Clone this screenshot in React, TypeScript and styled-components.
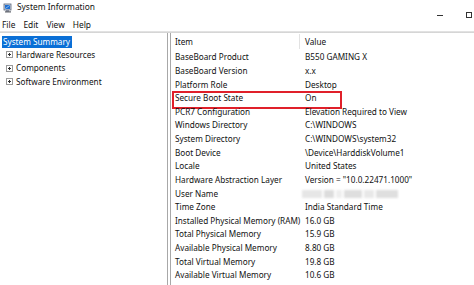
import React from "react";
import styled, { createGlobalStyle, css } from "styled-components";

const GlobalStyle = createGlobalStyle`
  html, body { margin: 0; padding: 0; background: #ffffff; }
  body { font-family: "Noto Sans", "Open Sans", sans-serif; color: #111; }
  * { box-sizing: border-box; }
`;

const Window = styled.div`
  width: 474px;
  height: 285px;
  overflow: hidden;
  display: flex;
  flex-direction: column;
  background: #ffffff;
  font-size: 8.2px;
`;

const TitleBar = styled.div`
  height: 17px;
  display: flex;
  align-items: flex-start;
  padding: 1px 0 0 3px;
`;

const TitleText = styled.span`
  margin-left: 4px;
  line-height: 12px;
  font-size: 8.4px;
  color: #111;
`;

const Controls = styled.div`
  margin-left: auto;
  display: flex;
  align-items: center;
  gap: 23px;
  height: 10px;
  margin-top: 9px;
  margin-right: 2px;
`;

const MinGlyph = styled.div`
  width: 6px;
  height: 1px;
  background: #333;
`;

const MaxGlyph = styled.div`
  width: 6px;
  height: 6px;
  border: 1px solid #333;
`;

const MenuBar = styled.div`
  height: 14px;
  display: flex;
  align-items: center;
  gap: 8px;
  padding: 1px 0 0 2px;
`;

const MenuItem = styled.span`
  line-height: 12px;
  font-size: 8.4px;
`;

const Divider = styled.div`
  height: 2px;
  background: linear-gradient(#e8e8e8, #cfcfcf);
`;

const Body = styled.div`
  flex: 1;
  display: flex;
  min-height: 0;
`;

const LeftPane = styled.div`
  width: 168px;
  border-right: 1px solid #a8a8a8;
  padding: 2px 0 0 2px;
  display: flex;
  flex-direction: column;
`;

const TreeRow = styled.div<{ $indent?: boolean }>`
  height: 13.3px;
  display: flex;
  align-items: center;
  padding-left: ${(p) => (p.$indent ? "4px" : "0")};
`;

const TreeLabel = styled.span<{ $selected?: boolean }>`
  line-height: 12px;
  padding: 0 2px 0 1px;
  ${(p) =>
    p.$selected &&
    css`
      background: #0a6fd6;
      color: #ffffff;
    `}
`;

const Expander = styled.svg`
  width: 7px;
  height: 7px;
  margin-right: 2px;
  flex: none;
`;

const RightPane = styled.div`
  flex: 1;
  margin-left: 2px;
  border-left: 1px solid #a8a8a8;
  display: flex;
  flex-direction: column;
`;

const ListGrid = styled.div`
  display: grid;
  grid-template-columns: 129px 1fr;
`;

const HeaderRow = styled(ListGrid)`
  height: 17.5px;
  align-items: stretch;
  padding: 1px 0 2px;
`;

const HeaderCell = styled.div<{ $sep?: boolean }>`
  display: flex;
  align-items: center;
  padding-left: ${(p) => (p.$sep ? "4px" : "5px")};
  border-right: ${(p) => (p.$sep ? "1px solid #e2e2e2" : "none")};
`;

const Row = styled(ListGrid)<{ $marked?: boolean }>`
  height: 13.625px;
  align-items: center;
  position: relative;
  ${(p) =>
    p.$marked &&
    css`
      &::after {
        content: "";
        position: absolute;
        left: 1px;
        top: 0;
        width: 166px;
        height: 14px;
        border: 2px solid #e0202a;
      }
    `}
`;

const Cell = styled.div<{ $value?: boolean }>`
  white-space: nowrap;
  line-height: 12px;
  padding-left: ${(p) => (p.$value ? "5px" : "4px")};
`;

const Blur = styled.span`
  display: inline-flex;
  gap: 2px;
  vertical-align: middle;
  margin-left: -3px;
`;

const BlurBlock = styled.span<{ $w: number; $shade: string }>`
  display: inline-block;
  height: 8px;
  width: ${(p) => p.$w}px;
  background: ${(p) => p.$shade};
  filter: blur(1px);
`;

const AppIcon = () => (
  <svg width="10" height="10" viewBox="0 0 10 10" style={{ marginTop: 2, flex: "none" }}>
    <rect x="1" y="1" width="7" height="6" fill="#cfd8e4" stroke="#5a6478" strokeWidth="0.8" />
    <rect x="2" y="2" width="5" height="4" fill="#1f6fd0" />
    <path d="M2.2 5.6 L6.8 2.4" stroke="#9cc6f5" strokeWidth="0.8" />
    <rect x="3" y="7.4" width="3" height="1" fill="#5a6478" />
    <rect x="2" y="8.4" width="6" height="1" fill="#3a3f4a" />
  </svg>
);

const Plus = () => (
  <Expander viewBox="0 0 7 7">
    <rect x="0.5" y="0.5" width="6" height="6" fill="#fff" stroke="#9a9a9a" strokeWidth="1" />
    <path d="M2 3.5 H5 M3.5 2 V5" stroke="#333" strokeWidth="1" />
  </Expander>
);

const rows: [string, string][] = [
  ["BaseBoard Product", "B550 GAMING X"],
  ["BaseBoard Version", "x.x"],
  ["Platform Role", "Desktop"],
  ["Secure Boot State", "On"],
  ["PCR7 Configuration", "Elevation Required to View"],
  ["Windows Directory", "C:\\WINDOWS"],
  ["System Directory", "C:\\WINDOWS\\system32"],
  ["Boot Device", "\\Device\\HarddiskVolume1"],
  ["Locale", "United States"],
  ["Hardware Abstraction Layer", 'Version = "10.0.22471.1000"'],
  ["User Name", "__blur__"],
  ["Time Zone", "India Standard Time"],
  ["Installed Physical Memory (RAM)", "16.0 GB"],
  ["Total Physical Memory", "15.9 GB"],
  ["Available Physical Memory", "8.80 GB"],
  ["Total Virtual Memory", "19.8 GB"],
  ["Available Virtual Memory", "10.6 GB"],
];

const blurBlocks: [number, string][] = [
  [20, "#e6e6e6"],
  [10, "#dcdcdc"],
  [6, "#eeeeee"],
  [18, "#dedede"],
  [10, "#e8e8e8"],
  [22, "#dfdfdf"],
];

export default function App() {
  return (
    <>
      <GlobalStyle />
      <Window>
        <TitleBar>
          <AppIcon />
          <TitleText>System Information</TitleText>
          <Controls>
            <MinGlyph />
            <MaxGlyph />
          </Controls>
        </TitleBar>
        <MenuBar>
          <MenuItem>File</MenuItem>
          <MenuItem>Edit</MenuItem>
          <MenuItem>View</MenuItem>
          <MenuItem>Help</MenuItem>
        </MenuBar>
        <Divider />
        <Body>
          <LeftPane>
            <TreeRow>
              <TreeLabel $selected>System Summary</TreeLabel>
            </TreeRow>
            <TreeRow $indent>
              <Plus />
              <TreeLabel>Hardware Resources</TreeLabel>
            </TreeRow>
            <TreeRow $indent>
              <Plus />
              <TreeLabel>Components</TreeLabel>
            </TreeRow>
            <TreeRow $indent>
              <Plus />
              <TreeLabel>Software Environment</TreeLabel>
            </TreeRow>
          </LeftPane>
          <RightPane>
            <HeaderRow>
              <HeaderCell $sep>Item</HeaderCell>
              <HeaderCell>Value</HeaderCell>
            </HeaderRow>
            {rows.map(([item, value]) => (
              <Row key={item} $marked={item === "Secure Boot State"}>
                <Cell>{item}</Cell>
                <Cell $value>
                  {value === "__blur__" ? (
                    <Blur>
                      {blurBlocks.map(([w, s], i) => (
                        <BlurBlock key={i} $w={w} $shade={s} />
                      ))}
                    </Blur>
                  ) : (
                    value
                  )}
                </Cell>
              </Row>
            ))}
          </RightPane>
        </Body>
      </Window>
    </>
  );
}
